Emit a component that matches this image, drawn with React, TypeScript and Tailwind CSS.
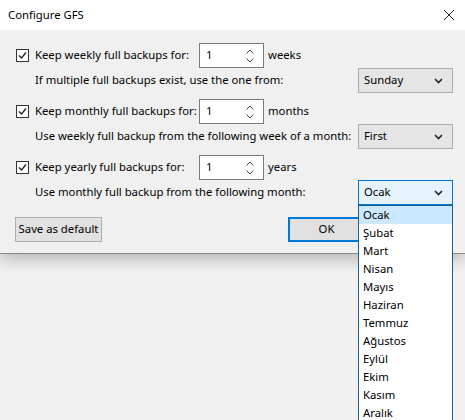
import React from 'react';

const months = ['Ocak', 'Şubat', 'Mart', 'Nisan', 'Mayıs', 'Haziran', 'Temmuz', 'Ağustos', 'Eylül', 'Ekim', 'Kasım', 'Aralık'];

function CheckBox() {
  return (
    <div className="w-[13px] h-[13px] border border-[#333] bg-white flex items-center justify-center shrink-0">
      <svg width="9" height="9" viewBox="0 0 9 9">
        <path d="M1 4.5 L3.5 7 L8 1.5" fill="none" stroke="#222" strokeWidth="1.3" />
      </svg>
    </div>
  );
}

function SpinBox({ value }: { value: string }) {
  return (
    <div className="w-[65px] h-[25px] border border-[#7a7a7a] bg-white flex items-center justify-between pl-[6px] pr-[9px] shrink-0">
      <span>{value}</span>
      <div className="flex flex-col gap-[4px]">
        <svg width="8" height="5" viewBox="0 0 8 5">
          <path d="M0.5 4.5 L4 1 L7.5 4.5" fill="none" stroke="#444" strokeWidth="1" />
        </svg>
        <svg width="8" height="5" viewBox="0 0 8 5">
          <path d="M0.5 0.5 L4 4 L7.5 0.5" fill="none" stroke="#444" strokeWidth="1" />
        </svg>
      </div>
    </div>
  );
}

function Chevron() {
  return (
    <svg width="9" height="6" viewBox="0 0 9 6">
      <path d="M1 1 L4.5 4.5 L8 1" fill="none" stroke="#222" strokeWidth="1.6" />
    </svg>
  );
}

function Select({ value, focused }: { value: string; focused?: boolean }) {
  return (
    <div
      className={`w-[95px] h-[25px] border flex items-center justify-between pl-[5px] pr-[9px] shrink-0 ${
        focused ? 'bg-[#e5f1fb] border-[#0078d7]' : 'bg-[#e5e5e5] border-[#acacac]'
      }`}
    >
      <span>{value}</span>
      <Chevron />
    </div>
  );
}

function SpinRow({ label, value, unit }: { label: string; value: string; unit: string }) {
  return (
    <div className="flex items-center h-[25px]">
      <div className="w-[35px] pl-[16px] shrink-0">
        <CheckBox />
      </div>
      <span className="w-[164px] whitespace-nowrap shrink-0">{label}</span>
      <SpinBox value={value} />
      <span className="ml-[4px]">{unit}</span>
    </div>
  );
}

function SelectRow({ label, value, focused }: { label: string; value: string; focused?: boolean }) {
  return (
    <div className="flex items-center h-[25px]">
      <span className="pl-[35px] w-[358px] whitespace-nowrap shrink-0">{label}</span>
      <Select value={value} focused={focused} />
    </div>
  );
}

export default function App() {
  return (
    <div
      className="relative w-[465px] h-[420px] bg-[#f0f0f0] overflow-hidden text-[11.3px] text-black"
      style={{ fontFamily: '"Noto Sans", "Liberation Sans", sans-serif' }}
    >
      <div className="relative bg-[#f0f0f0] border-b border-[#8a8a8a] shadow-[0_6px_14px_rgba(0,0,0,0.22)]">
        {/* Title bar */}
        <div className="h-[30px] bg-white flex items-center justify-between pl-[8px] pr-[10px]">
          <span>Configure GFS</span>
          <svg width="12" height="12" viewBox="0 0 12 12">
            <path d="M1 1 L11 11 M11 1 L1 11" fill="none" stroke="#222" strokeWidth="1" />
          </svg>
        </div>

        {/* Body */}
        <div className="flex flex-col pt-[13px] pb-[11px]">
          <SpinRow label="Keep weekly full backups for:" value="1" unit="weeks" />
          <SelectRow label="If multiple full backups exist, use the one from:" value="Sunday" />
          <div className="h-[6px]" />
          <SpinRow label="Keep monthly full backups for:" value="1" unit="months" />
          <SelectRow label="Use weekly full backup from the following week of a month:" value="First" />
          <div className="h-[6px]" />
          <SpinRow label="Keep yearly full backups for:" value="1" unit="years" />
          <SelectRow label="Use monthly full backup from the following month:" value="Ocak" focused />

          <div className="flex items-center mt-[12px] pl-[15px]">
            <button className="w-[87px] h-[25px] bg-[#e1e1e1] border border-[#adadad]">Save as default</button>
            <button className="ml-[186px] w-[77px] h-[25px] bg-[#e1e1e1] border-2 border-[#0078d7]">OK</button>
          </div>
        </div>
      </div>

      {/* Open dropdown list */}
      <div className="absolute left-[358px] top-[205px] w-[95px] bg-white border border-[#1c5e91] flex flex-col">
        {months.map((m, i) => (
          <div key={m} className={`h-[18px] flex items-center pl-[4px] ${i === 0 ? 'bg-[#cce8ff]' : ''}`}>
            {m}
          </div>
        ))}
      </div>
    </div>
  );
}
